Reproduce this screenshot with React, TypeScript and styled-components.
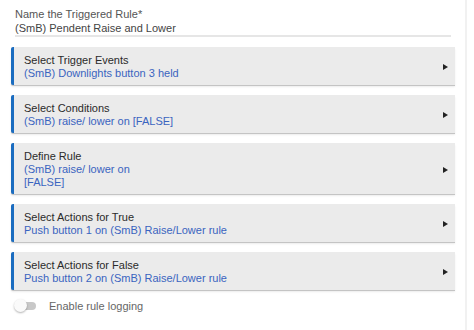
import { FC } from "react"
import styled, { createGlobalStyle } from "styled-components"

type Section = {
  title: string
  lines: string[]
}

const sections: Section[] = [
  { title: "Select Trigger Events", lines: ["(SmB) Downlights button 3 held"] },
  { title: "Select Conditions", lines: ["(SmB) raise/ lower on [FALSE]"] },
  { title: "Define Rule", lines: ["(SmB) raise/ lower on", "[FALSE]"] },
  { title: "Select Actions for True", lines: ["Push button 1 on (SmB) Raise/Lower rule"] },
  { title: "Select Actions for False", lines: ["Push button 2 on (SmB) Raise/Lower rule"] },
]

const App: FC = () => {
  return (
    <>
      <GlobalStyle />
      <Page>
        <Field>
          <Label>Name the Triggered Rule*</Label>
          <Value>(SmB) Pendent Raise and Lower</Value>
        </Field>
        <Cards>
          {sections.map(section => (
            <Card key={section.title}>
              <CardText>
                <CardTitle>{section.title}</CardTitle>
                {section.lines.map(line => (
                  <CardLine key={line}>{line}</CardLine>
                ))}
              </CardText>
              <Arrow />
            </Card>
          ))}
        </Cards>
        <ToggleRow>
          <Track>
            <Knob />
          </Track>
          <ToggleLabel>Enable rule logging</ToggleLabel>
        </ToggleRow>
      </Page>
    </>
  )
}
export default App

const GlobalStyle = createGlobalStyle`
  html, body {
    margin: 0;
    padding: 0;
    background: #fff;
    font-family: "Liberation Sans", Arial, sans-serif;
  }
`
const Page = styled.div`
  width: 467px;
  height: 330px;
  box-sizing: border-box;
  border-right: 2px solid #f1f1f1;
  padding: 7px 10px 0 11px;
`
const Field = styled.div`
  margin: 0 4px;
  border-bottom: 2px solid #e6e6e6;
`
const Label = styled.div`
  font-size: 11px;
  line-height: 14px;
  color: #555;
`
const Value = styled.div`
  font-size: 11px;
  line-height: 14px;
  color: #444;
`
const Cards = styled.div`
  display: flex;
  flex-direction: column;
  gap: 10px;
  margin-top: 10px;
`
const Card = styled.div`
  display: flex;
  align-items: center;
  background: #ebebeb;
  border-left: 3px solid #1a6cc0;
  border-radius: 2px 0 0 2px;
  box-shadow: 0 1px 0 #c4c4c4, 0 2px 2px rgba(0, 0, 0, 0.08);
  padding: 7px 7px 5px 10px;
`
const CardText = styled.div`
  flex: 1;
`
const CardTitle = styled.div`
  font-size: 11px;
  line-height: 13px;
  color: #2a2a2a;
`
const CardLine = styled.div`
  font-size: 11px;
  line-height: 13px;
  color: #3a64c0;
`
const Arrow = styled.div`
  width: 0;
  height: 0;
  border-top: 3px solid transparent;
  border-bottom: 3px solid transparent;
  border-left: 5px solid #222;
`
const ToggleRow = styled.div`
  display: flex;
  align-items: center;
  gap: 13px;
  margin: 10px 0 0 5px;
`
const Track = styled.div`
  position: relative;
  width: 20px;
  height: 8px;
  border-radius: 4px;
  background: #c8c8c8;
`
const Knob = styled.div`
  position: absolute;
  left: -2px;
  top: -3px;
  width: 13px;
  height: 13px;
  border-radius: 50%;
  background: #fafafa;
  box-shadow: 0 1px 2px rgba(0, 0, 0, 0.3);
`
const ToggleLabel = styled.div`
  font-size: 11px;
  color: #666;
`
